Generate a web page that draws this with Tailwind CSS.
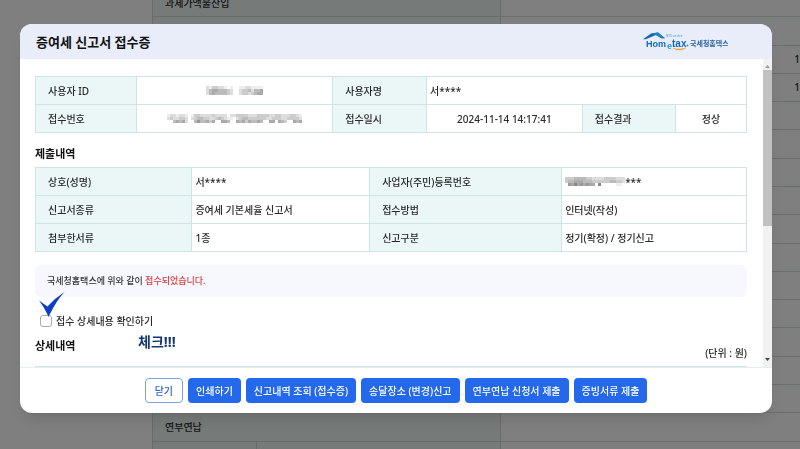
<!DOCTYPE html>
<html lang="ko">
<head>
    <meta charset="UTF-8">
    <meta name="viewport" content="width=device-width, initial-scale=1.0">
    <title>증여세 신고서 접수증</title>
    <script src="https://cdn.jsdelivr.net/npm/@tailwindcss/browser@4"></script>
</head>
<body class="relative h-screen overflow-hidden bg-white font-['Noto_Sans','Noto_Sans_CJK_KR',sans-serif] text-[10px] leading-4 font-medium text-[#2a2a2a]">
    <!-- page behind the dialog -->
    <main class="-mt-3 pl-[152px]">
        <table class="w-full h-[calc(100vh+33px)] table-fixed border-collapse [&_tr]:h-7 [&_td]:border-y [&_td]:border-[#d3dedf] [&_td]:p-0 [&_th]:border [&_th]:border-[#c9dcdb] [&_th]:bg-[#ecf6f5] [&_th]:p-0 [&_th]:pl-3 [&_th]:text-left [&_th]:font-medium">
            <colgroup><col class="w-[104px]"><col class="w-[244px]"><col></colgroup>
            <tbody>
                <tr><th colspan="2">과세가액불산입</th><td></td></tr>
                <tr><th colspan="2"></th><td></td></tr>
                <tr><th colspan="2"></th><td class="text-right">1</td></tr>
                <tr><th colspan="2"></th><td class="text-right">1</td></tr>
                <tr><th colspan="2"></th><td></td></tr>
                <tr><th colspan="2"></th><td></td></tr>
                <tr><th colspan="2"></th><td></td></tr>
                <tr><th colspan="2"></th><td></td></tr>
                <tr><th colspan="2"></th><td></td></tr>
                <tr><th colspan="2"></th><td></td></tr>
                <tr><th colspan="2"></th><td></td></tr>
                <tr><th colspan="2"></th><td></td></tr>
                <tr><th colspan="2"></th><td></td></tr>
                <tr><th colspan="2"></th><td></td></tr>
                <tr><th colspan="2"></th><td></td></tr>
                <tr><th colspan="2">연부연납</th><td></td></tr>
                <tr><th></th><th></th><td></td></tr>
            </tbody>
        </table>
    </main>

    <!-- dialog -->
    <div class="fixed inset-0 flex bg-black/50 pt-6 pr-7 pb-9 pl-5">
        <section role="dialog" aria-labelledby="title" class="flex w-full flex-col overflow-hidden rounded-xl bg-white shadow-lg">
            <header class="flex h-[35px] shrink-0 items-center justify-between bg-[#e8edf9] pr-11 pl-4">
                <h1 id="title" class="text-[13px] font-bold text-[#111]">증여세 신고서 접수증</h1>
                <svg class="h-5 w-[86px]" viewBox="0 0 86 20" role="img" aria-label="Hometax 국세청홈택스">
                    <path d="M1 7.2 9 1.6 16 .6l7 5.6h-3.6L14 3 5.5 6.4 4 7.2z" fill="#1769b3"/>
                    <path d="M9 1.6 16 .6l7 5.6h-3.6L14 3z" fill="#1f82c6"/>
                    <text x="24" y="4.6" font-size="3" font-weight="500" fill="#5b9fd0">NTS service</text>
                    <g font-family="Liberation Sans, sans-serif" font-size="10" font-weight="700">
                        <text x="4" y="14.5" font-size="9" fill="#1769b3">Hom</text>
                        <text x="25" y="16.5" font-size="9" fill="#2ba0d8">e</text>
                        <text x="30" y="14.5" fill="#1769b3">tax</text>
                    </g>
                    <circle cx="45.5" cy="13.6" r="1" fill="#3d9a50"/>
                    <path d="M31 16.2q6 2 13-.4-6 4.4-13 .4z" fill="#ee9b3a" stroke="#ee9b3a" stroke-width=".4"/>
                    <text x="48" y="14" font-size="7" font-weight="700" fill="#2a64a3">국세청홈택스</text>
                </svg>
            </header>

            <div class="flex min-h-0 flex-1 border-b border-[#e4efef]">
                <div class="relative min-w-0 flex-1 overflow-hidden pt-[17px] pr-4 pl-[15px]">
                    <table class="w-full table-fixed border-collapse [&_td]:h-7 [&_td]:border [&_td]:border-[#cfe5e3] [&_td]:p-0 [&_th]:h-7 [&_th]:border [&_th]:border-[#cfe5e3] [&_th]:bg-[#ebf7f6] [&_th]:p-0 [&_th]:pl-3 [&_th]:text-left [&_th]:font-medium">
                        <colgroup><col class="w-[14.2%]"><col class="w-[27.6%]"><col class="w-[13.2%]"><col class="w-[21.9%]"><col class="w-[13.1%]"><col class="w-[10%]"></colgroup>
                        <tbody>
                            <tr>
                                <th scope="row">사용자 ID</th>
                                <td><svg class="mx-auto h-[9px] w-[57px]" data-shades="deccddefe00eeddeeeed,dbaabbbcd00dccbdbbabd,dbabbbbcd00dccdcbaabd" viewBox="0 0 57 9" aria-hidden="true"></svg></td>
                                <th scope="row">사용자명</th>
                                <td colspan="3"><span class="pl-[3px]">서****</span></td>
                            </tr>
                            <tr>
                                <th scope="row">접수번호</th>
                                <td><svg class="mx-auto h-[9px] w-[135px]" data-shades="eddedde0eccddddcdddd0ddccccdddccccddccdddccde,dcddccd0dcbbccddcbcdee0dcbbccccccddcccddccccd,ffbabad0fb9bbacaffaab0fabacabbabffaafabcffabad" viewBox="0 0 135 9" aria-hidden="true"></svg></td>
                                <th scope="row">접수일시</th>
                                <td class="text-center">2024-11-14 14:17:41</td>
                                <th scope="row">접수결과</th>
                                <td class="text-center">정상</td>
                            </tr>
                        </tbody>
                    </table>

                    <h2 class="mt-3 mb-1 text-[11px] leading-[18px] font-bold text-[#111]">제출내역</h2>
                    <table class="w-full table-fixed border-collapse [&_td]:h-7 [&_td]:border [&_td]:border-[#cfe5e3] [&_td]:p-0 [&_td]:pl-[3px] [&_th]:h-7 [&_th]:border [&_th]:border-[#cfe5e3] [&_th]:bg-[#ebf7f6] [&_th]:p-0 [&_th]:pl-3 [&_th]:text-left [&_th]:font-medium">
                        <colgroup><col class="w-[22%]"><col class="w-[25%]"><col class="w-[27%]"><col class="w-[26%]"></colgroup>
                        <tbody>
                            <tr>
                                <th scope="row">상호(성명)</th>
                                <td>서****</td>
                                <th scope="row">사업자(주민)등록번호</th>
                                <td><div class="flex items-center"><svg class="h-[9px] w-[60px]" data-shades="cccbbbbccddddccccddd,cbbaaabbbccccccbbccd,f9a8a9a9aaf8fffffeef" viewBox="0 0 60 9" aria-hidden="true"></svg>***</div></td>
                            </tr>
                            <tr>
                                <th scope="row">신고서종류</th>
                                <td>증여세 기본세율 신고서</td>
                                <th scope="row">접수방법</th>
                                <td>인터넷(작성)</td>
                            </tr>
                            <tr>
                                <th scope="row">첨부한서류</th>
                                <td>1종</td>
                                <th scope="row">신고구분</th>
                                <td>정기(확정) / 정기신고</td>
                            </tr>
                        </tbody>
                    </table>

                    <p class="mt-[13px] rounded-md bg-[#f6f8fe] px-3 py-2 text-[9px] text-[#333]">국세청홈택스에 위와 같이 <span class="text-[#e23b3b]">접수되었습니다.</span></p>

                    <div class="mt-4 flex items-center gap-1 pl-[5px]">
                        <input type="checkbox" id="detail" class="size-3 appearance-none rounded-[3px] border border-[#aaa] bg-white">
                        <label for="detail">접수 상세내용 확인하기</label>
                    </div>
                    <div class="mt-2 flex items-start justify-between">
                        <h2 class="text-[11px] leading-[18px] font-bold text-[#111]">상세내역</h2>
                        <span class="pt-2">(단위 : 원)</span>
                    </div>
                    <div class="mt-[5px] h-7 border border-[#cfe5e3] bg-[#ebf7f6]"></div>

                    <!-- hand-placed notes -->
                    <svg class="absolute top-[232px] left-[18px] h-[26px] w-7" viewBox="0 0 28 26" aria-hidden="true">
                        <path d="M1 9.5 9.5 15.5Q17 7 26.5 1 18 10 10.5 26 7 17 1 9.5z" fill="#0b3fc6"/>
                    </svg>
                    <span class="absolute top-[275px] left-[118px] text-sm leading-4 font-bold text-[#15356f]">체크!!!</span>
                </div>

                <div class="flex w-[9px] shrink-0 flex-col items-center bg-[#f1f1f1] py-1" aria-hidden="true">
                    <svg class="h-[7px] w-[7px]" viewBox="0 0 7 7"><path d="M1 5 3.5 2 6 5z" fill="#999"/></svg>
                    <div class="h-[52%] w-full bg-[#c1c1c1]"></div>
                    <svg class="mt-auto h-[7px] w-[7px]" viewBox="0 0 7 7"><path d="M1 2 3.5 5 6 2z" fill="#444"/></svg>
                </div>
            </div>

            <footer class="flex shrink-0 justify-center gap-[5px] pt-[10px] pb-[10px]">
                <button type="button" class="h-[25px] rounded border border-[#7ba2e0] bg-white px-[9px] text-[#2a62c9]">닫기</button>
                <button type="button" class="h-[25px] rounded bg-[#2469eb] px-2 text-white">인쇄하기</button>
                <button type="button" class="h-[25px] rounded bg-[#2469eb] px-2 text-white">신고내역 조회 (접수증)</button>
                <button type="button" class="h-[25px] rounded bg-[#2469eb] px-2 text-white">송달장소 (변경)신고</button>
                <button type="button" class="h-[25px] rounded bg-[#2469eb] px-2 text-white">연부연납 신청서 제출</button>
                <button type="button" class="h-[25px] rounded bg-[#2469eb] px-2 text-white">증빙서류 제출</button>
            </footer>
        </section>
    </div>

    <script>
        // mosaic over private values: one hex digit of grey per 3px cell, 0 = empty
        document.querySelectorAll('[data-shades]').forEach((svg) => {
            svg.dataset.shades.split(',').forEach((row, y) => {
                [...row].forEach((shade, x) => {
                    if (shade === '0') return;
                    const rect = document.createElementNS('http://www.w3.org/2000/svg', 'rect');
                    rect.setAttribute('x', x * 3);
                    rect.setAttribute('y', y * 3);
                    rect.setAttribute('width', 3);
                    rect.setAttribute('height', 3);
                    rect.setAttribute('fill', '#' + shade.repeat(3));
                    svg.appendChild(rect);
                });
            });
        });
    </script>
</body>
</html>
